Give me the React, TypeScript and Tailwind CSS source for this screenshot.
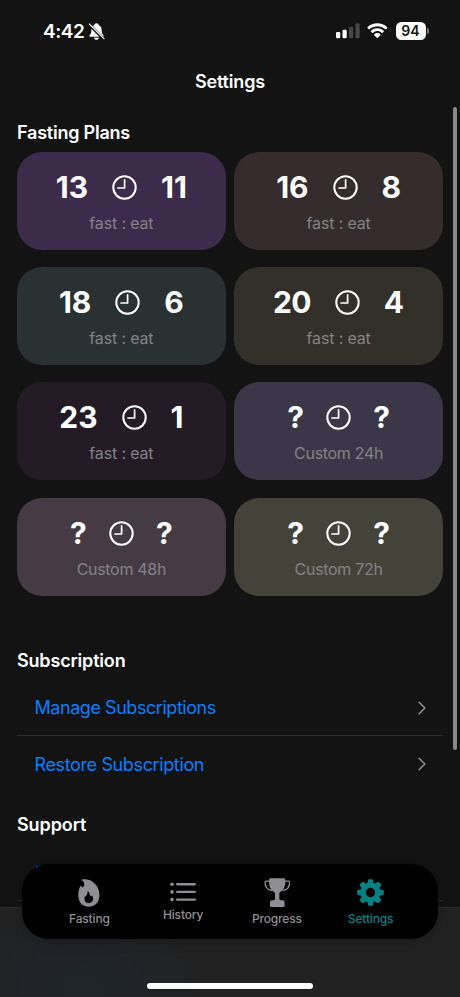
import React from "react";

const plans = [
  { fast: "13", eat: "11", label: "fast : eat", bg: "bg-[#3c2b4b]" },
  { fast: "16", eat: "8", label: "fast : eat", bg: "bg-[#362c2d]" },
  { fast: "18", eat: "6", label: "fast : eat", bg: "bg-[#2a3132]" },
  { fast: "20", eat: "4", label: "fast : eat", bg: "bg-[#333029]" },
  { fast: "23", eat: "1", label: "fast : eat", bg: "bg-[#241b27]" },
  { fast: "?", eat: "?", label: "Custom 24h", bg: "bg-[#3b3648]" },
  { fast: "?", eat: "?", label: "Custom 48h", bg: "bg-[#463a44]" },
  { fast: "?", eat: "?", label: "Custom 72h", bg: "bg-[#44433a]" },
];

function ClockIcon() {
  return (
    <svg viewBox="0 0 25 25" className="h-[25px] w-[25px] shrink-0" fill="none" stroke="#fff" strokeLinecap="round" strokeLinejoin="round">
      <circle cx="12.5" cy="12.5" r="11.2" strokeWidth="2" />
      <path d="M12.6 4.9V13H6" strokeWidth="1.7" />
    </svg>
  );
}

function BellSlash() {
  return (
    <svg viewBox="0 0 51 51" className="h-[17px] w-[17px]">
      <path d="M19 7C19 3 22 1 25.500 1S32 3 32 7C39 9 41 15 41 22C41 30 43 33 46 36C48 39 47 41 44 41H7C4 41 3 38 6 35C9 32 10 29 10 22C10 14 12 9 19 7ZM18 44H33C32 48 29 50 25.500 50S19 48 18 44Z" fill="#fff" />
      <path d="M1 2L48 49" stroke="#131313" strokeWidth="9" />
      <path d="M4 3L48 47" stroke="#fff" strokeWidth="3.500" strokeLinecap="round" />
    </svg>
  );
}

function Signal() {
  return (
    <svg viewBox="0 0 24 16" className="h-[16px] w-[24px]">
      <rect x="0" y="9" width="4.200" height="6.300" rx="1.300" fill="#fff" />
      <rect x="6.500" y="6.700" width="4.200" height="8.600" rx="1.300" fill="#fff" />
      <rect x="13" y="3.800" width="4.200" height="11.500" rx="1.300" fill="#464646" />
      <rect x="19.500" y="0.300" width="4.200" height="15" rx="1.300" fill="#464646" />
    </svg>
  );
}

function Wifi() {
  return (
    <svg viewBox="0 0 62 46" className="h-[15.300px] w-[20.700px]" fill="#fff">
      <path d="M31 1C42 1 52 5 60 12Q62 14 60 16L57.500 18.500Q56 20 54 18C47 12 39 9.500 31 9.500S15 12 8 18Q6 20 4.500 18.500L2 16Q0 14 2 12C10 5 20 1 31 1Z" />
      <path d="M31 15.500C38 15.500 45 18 50 23Q51.500 24.500 50 26L47 29Q45.500 30.500 43.500 29C40 26 36 24 31 24S22 26 18.500 29Q16.500 30.500 15 29L12 26Q10.500 24.500 12 23C17 18 24 15.500 31 15.500Z" />
      <path d="M31 30C34.500 30 38 31.500 40 33.500Q41.500 35 40 36.500L32.500 44Q31 45.500 29.500 44L22 36.500Q20.500 35 22 33.500C24 31.500 27.500 30 31 30Z" />
    </svg>
  );
}

function Chevron() {
  return (
    <svg viewBox="0 0 8 14" className="h-[14px] w-[8px]" fill="none" stroke="#98989c" strokeWidth="1.300" strokeLinecap="round" strokeLinejoin="round">
      <path d="M1.100 1.300L6.900 7L1.100 12.700" />
    </svg>
  );
}

function Flame() {
  return (
    <svg viewBox="236 116 66 84" className="h-[28px] w-[22px]" fill="#8e8e93">
      <path fillRule="evenodd" d="M246 118C260 115 276 119 287 130C297 141 301 153 300 168C299 187 287 199 269 199C249 199 237 186 237 164C237 153 239 145 243 138C246 136 249 139 249 142C252 141 255 136 255 131C254 125 251 122 246 120ZM265 152C265 161 262 164 260 168C259 170 257 168 257 166C253 179 257 188 268 188C277 188 282 181 281 174C281 170 279 167 277 165C277 168 276 169 274 168C270 165 273 157 265 152Z" />
    </svg>
  );
}

function ListIcon() {
  return (
    <svg viewBox="0 0 26 20" className="h-[20px] w-[26px]" fill="#8e8e93">
      <circle cx="2" cy="2.200" r="1.800" />
      <circle cx="2" cy="9.900" r="1.800" />
      <circle cx="2" cy="17.600" r="1.800" />
      <rect x="6" y="1.100" width="20" height="2.300" rx="1.150" />
      <rect x="6" y="8.800" width="20" height="2.300" rx="1.150" />
      <rect x="6" y="16.500" width="20" height="2.300" rx="1.150" />
    </svg>
  );
}

function Trophy() {
  return (
    <svg viewBox="101 113 80 88" className="h-[29.300px] w-[26.700px]" fill="#8e8e93">
      <path d="M121 114H160Q165 114 165 119C165 137 161 149 151 154Q147 156 147 160V175Q147 180 152 180H157Q163 180 163 187V196Q163 200 159 200H123Q119 200 119 196V187Q119 180 125 180H129Q134 180 134 175V160Q134 156 130 154C120 149 116 137 116 119Q116 114 121 114Z" />
      <path d="M117 122.500H107Q104 122.500 104 126C104 140 112 149 125 151M164 122.500H175Q178 122.500 178 126C178 140 170 149 157 151" fill="none" stroke="#8e8e93" strokeWidth="4" />
    </svg>
  );
}

function Gear() {
  const teeth = [0, 45, 90, 135, 180, 225, 270, 315];
  return (
    <svg viewBox="-40.500 -40.500 81 81" className="h-[27px] w-[27px]">
      {teeth.map((angle) => (
        <path key={angle} transform={`rotate(${angle})`} d="M-12 -26C-9 -28 -8 -31 -8 -35Q-8 -40 -4 -40H4Q8 -40 8 -35C8 -31 9 -28 12 -26L9 -20H-9Z" fill="#0a8080" />
      ))}
      <circle r="21.500" fill="none" stroke="#0a8080" strokeWidth="15" />
    </svg>
  );
}

function PlanCard({ plan }: { plan: (typeof plans)[number] }) {
  const custom = plan.fast === "?";
  return (
    <div className={`flex h-[98px] flex-col items-center rounded-[25px] pt-[22px] ${plan.bg}`}>
      <div className={`flex h-[27px] items-center text-[30px] leading-[27px] font-bold text-white ${custom ? "gap-[22px]" : "gap-[24px]"}`}>
        <span className={plan.fast === "20" ? "tracking-[-0.700px]" : ""}>{plan.fast}</span>
        <ClockIcon />
        <span>{plan.eat}</span>
      </div>
      <div className={`mt-[12px] text-[16px] leading-[20px] text-[#838287] ${custom ? "tracking-[-0.300px]" : "tracking-[-0.150px]"}`}>{plan.label}</div>
    </div>
  );
}

export default function App() {
  return (
    <main className="relative flex h-[997px] w-[460px] flex-col overflow-hidden bg-[#131313] font-['Inter','Liberation_Sans',sans-serif] text-white">
      <header className="flex h-[62px] shrink-0 items-center justify-between pr-[31px] pl-[43px]">
        <div className="flex items-center gap-[4px] pt-[1px]">
          <span className="text-[19px] leading-6 font-semibold tracking-[-0.450px]">4:42</span>
          <BellSlash />
        </div>
        <div className="flex items-center">
          <Signal />
          <div className="ml-[7.500px]"><Wifi /></div>
          <div className="ml-[7.500px] flex h-[17.500px] w-[30px] items-center justify-center rounded-[5.500px] bg-white text-[14px] leading-4 font-semibold text-[#131313]">94</div>
          <div className="ml-[1px] h-[6px] w-[2.500px] rounded-r-full bg-[#77777a]" />
        </div>
      </header>

      <h1 className="h-[38px] shrink-0 text-center text-[18px] leading-[39px] font-semibold tracking-[-0.150px]">Settings</h1>

      <section className="shrink-0 px-[17px] pt-[20px]">
        <h2 className="h-[32px] text-[18px] leading-[26px] font-semibold tracking-[-0.220px]">Fasting Plans</h2>
        <div className="grid grid-cols-2 gap-x-[8.500px] gap-y-[17.200px]">
          {plans.map((plan, i) => <PlanCard key={i} plan={plan} />)}
        </div>
      </section>

      <section className="mt-[52px] shrink-0 px-[17px]">
        <h2 className="h-[32px] text-[18px] leading-[26px] font-semibold tracking-[-0.180px]">Subscription</h2>
        <div className="flex h-[56.500px] items-center justify-between border-b border-[#2b2b2c] pt-[1px] pr-[17.500px] pl-[17.500px] text-[18px] text-[#087fff]">
          <span className="tracking-[-0.450px]">Manage Subscriptions</span>
          <Chevron />
        </div>
        <div className="flex h-[56.500px] items-center justify-between pr-[17.500px] pl-[17.500px] text-[18px] text-[#087fff]">
          <span className="tracking-[-0.370px]">Restore Subscription</span>
          <Chevron />
        </div>
      </section>

      <section className="mt-[19px] shrink-0 px-[17px]">
        <h2 className="h-[32px] text-[18px] leading-[26px] font-semibold tracking-[-0.100px]">Support</h2>
        <div className="h-[57px] border-b border-[#2b2b2c] pt-[22px] pl-[18.500px]">
          <div className="h-[3px] w-[3px] bg-[#087fff]" />
        </div>
      </section>

      <div className="absolute top-[107px] right-[3px] h-[643px] w-[4px] rounded-full bg-[#898989]" />

      <div className="absolute inset-x-0 bottom-0 h-[90px] border-t border-[#292929] bg-[#222222] bg-[radial-gradient(ellipse_120px_85px_at_82px_80px,#20262d,#222222)]" />

      <nav className="absolute top-[864px] left-[22px] flex h-[75px] w-[416px] rounded-[27px] bg-black pr-[20.500px] pl-[20.500px] text-[12px] leading-[14px] font-medium tracking-[-0.150px] text-[#8e8e93] shadow-[0_2px_12px_rgba(0,0,0,0.25)]">
        <div className="flex flex-1 flex-col items-center pt-[15px]"><Flame /><span className="mt-[5px]">Fasting</span></div>
        <div className="flex flex-1 flex-col items-center pt-[18px]"><ListIcon /><span className="mt-[6px]">History</span></div>
        <div className="flex flex-1 flex-col items-center pt-[14px]"><Trophy /><span className="mt-[5px]">Progress</span></div>
        <div className="flex flex-1 flex-col items-center pt-[15px] text-[#0a8080]"><Gear /><span className="mt-[6px]">Settings</span></div>
      </nav>

      <div className="absolute bottom-[8px] left-[147px] h-[6px] w-[166px] rounded-full bg-white" />
    </main>
  );
}
